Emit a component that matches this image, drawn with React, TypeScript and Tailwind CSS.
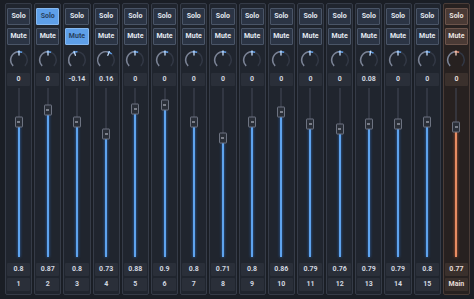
import React from "react";

type Ch = { name: string; pan: number; vol: number; solo?: boolean; mute?: boolean; main?: boolean };

const channels: Ch[] = [
  { name: "1", pan: 0, vol: 0.8 },
  { name: "2", pan: 0, vol: 0.87, solo: true },
  { name: "3", pan: -0.14, vol: 0.8, mute: true },
  { name: "4", pan: 0.16, vol: 0.73 },
  { name: "5", pan: 0, vol: 0.88 },
  { name: "6", pan: 0, vol: 0.9 },
  { name: "7", pan: 0, vol: 0.8 },
  { name: "8", pan: 0, vol: 0.71 },
  { name: "9", pan: 0, vol: 0.8 },
  { name: "10", pan: 0, vol: 0.86 },
  { name: "11", pan: 0, vol: 0.79 },
  { name: "12", pan: 0, vol: 0.76 },
  { name: "13", pan: 0.08, vol: 0.79 },
  { name: "14", pan: 0, vol: 0.79 },
  { name: "15", pan: 0, vol: 0.8 },
  { name: "Main", pan: 0, vol: 0.77, main: true },
];

function pt(cx: number, cy: number, r: number, deg: number) {
  const a = (deg * Math.PI) / 180;
  return [cx + r * Math.sin(a), cy - r * Math.cos(a)];
}

function arc(cx: number, cy: number, r: number, a0: number, a1: number) {
  const [x0, y0] = pt(cx, cy, r, a0);
  const [x1, y1] = pt(cx, cy, r, a1);
  const large = a1 - a0 > 180 ? 1 : 0;
  return `M ${x0} ${y0} A ${r} ${r} 0 ${large} 1 ${x1} ${y1}`;
}

function Knob({ value, main }: { value: number; main?: boolean }) {
  const ang = value * 135;
  const accent = main ? "#e0876a" : "#5d9de6";
  const tick = main ? "#f6d0c0" : "#c4dcfa";
  const [tx0, ty0] = pt(10, 10, 5, ang);
  const [tx1, ty1] = pt(10, 10, 9, ang);
  return (
    <svg width="20" height="20" viewBox="0 0 20 20">
      <path d={arc(10, 10, 8.3, -135, 135)} fill="none" stroke="#323845" strokeWidth="1.5" />
      <path d={arc(10, 10, 8.3, -135, ang)} fill="none" stroke="#7c8496" strokeWidth="1.5" />
      <path d={arc(10, 10, 8.3, ang - 10, ang + 22)} fill="none" stroke={accent} strokeWidth="1.5" />
      <line x1={tx0} y1={ty0} x2={tx1} y2={ty1} stroke={tick} strokeWidth="1.3" strokeLinecap="round" />
    </svg>
  );
}

function Fader({ value, main }: { value: number; main?: boolean }) {
  const H = 171;
  const c = (1 - value) * H;
  return (
    <div className="relative w-full flex-1">
      <div className="absolute left-1/2 top-0 bottom-[3px] w-px -translate-x-1/2 bg-[#454b58]" />
      <div
        className={
          main
            ? "absolute left-1/2 bottom-[3px] w-[2px] -translate-x-1/2 bg-[#e98c62] shadow-[0_0_3px_#c0603a]"
            : "absolute left-1/2 bottom-[3px] w-[2px] -translate-x-1/2 bg-[#5ea3ee] shadow-[0_0_3px_#2f6fc0]"
        }
        style={{ top: c }}
      />
      <div
        className="absolute left-1/2 flex h-[11px] w-[8px] -translate-x-1/2 -translate-y-1/2 items-center justify-center rounded-[1px] border border-[#6d7381] bg-[#2a2f38]"
        style={{ top: c }}
      >
        <div className="h-px w-[3px] bg-[#c9ced8]" />
      </div>
    </div>
  );
}

function Btn({ label, active, main }: { label: string; active?: boolean; main?: boolean }) {
  const cls = active
    ? "bg-[#5e9fe8] border-[#86b9f1] text-[#28405e]"
    : main
    ? "bg-[#4a3a35] border-[#6c544b] text-[#ece4e0]"
    : "bg-[#2b3444] border-[#4a5567] text-[#e4e9f1]";
  return (
    <div className={`flex h-[17px] w-full items-center justify-center rounded-[1px] border text-[7px] font-bold ${cls}`}>
      {label}
    </div>
  );
}

function Box({ text, main }: { text: string; main?: boolean }) {
  return (
    <div
      className={`flex h-[13px] w-full items-center justify-center rounded-[1px] text-[7px] font-bold ${
        main ? "bg-[#3a302c] text-[#e6ddd8]" : "bg-[#2a2f39] text-[#d3d8e0]"
      }`}
    >
      {text}
    </div>
  );
}

function Strip({ ch }: { ch: Ch }) {
  return (
    <div
      className={`flex min-w-0 flex-1 flex-col items-center rounded-[2px] border px-[1px] pt-[4px] pb-[3px] ${
        ch.main ? "border-[#4a3c37] bg-[#272120]" : "border-[#353b47] bg-[#20252e]"
      }`}
    >
      <Btn label="Solo" active={ch.solo} main={ch.main} />
      <div className="h-[3px]" />
      <Btn label="Mute" active={ch.mute} main={ch.main} />
      <div className="h-[5px]" />
      <div className="flex h-[19px] items-center justify-center">
        <Knob value={ch.pan} main={ch.main} />
      </div>
      <div className="h-[4px]" />
      <Box text={String(ch.pan)} main={ch.main} />
      <div className="h-[2px]" />
      <Fader value={ch.vol} main={ch.main} />
      <div className="h-[3px]" />
      <Box text={String(ch.vol)} main={ch.main} />
      <div className="h-[2px]" />
      <Box text={ch.name} main={ch.main} />
    </div>
  );
}

export default function App() {
  return (
    <div
      className="flex h-[299px] w-[474px] gap-[2px] bg-[#1a1e25] pt-[3px] pb-[4px] pl-[5px] pr-[4px]"
      style={{ fontFamily: "Roboto, 'Liberation Sans', sans-serif" }}
    >
      {channels.map((ch) => (
        <Strip key={ch.name} ch={ch} />
      ))}
    </div>
  );
}
